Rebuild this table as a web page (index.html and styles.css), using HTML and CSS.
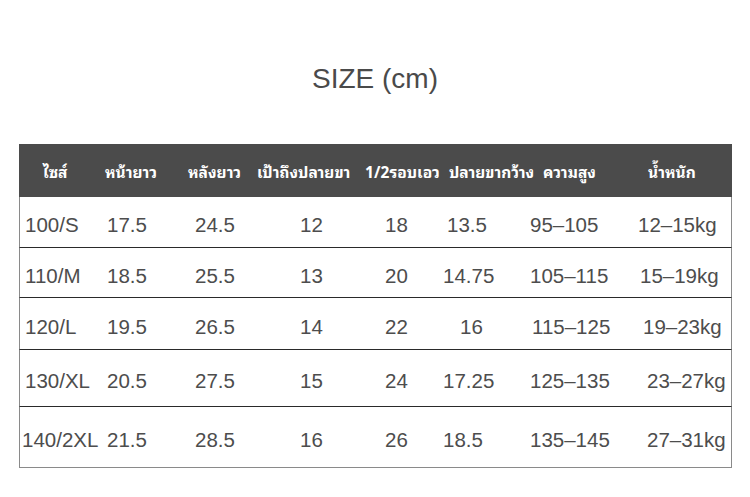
FILE: index.html
```html
<!DOCTYPE html>
<html lang="th">
<head>
<meta charset="utf-8">
<link rel="stylesheet" href="styles.css">
</head>
<body>
<h1 class="title">SIZE (cm)</h1>
<div class="table">
  <div class="head">
    <div class="hc first">ไซส์</div>
    <div class="hc">หน้ายาว</div>
    <div class="hc">หลังยาว</div>
    <div class="hc">เป้าถึงปลายขา</div>
    <div class="hc">1/2รอบเอว</div>
    <div class="hc">ปลายขากว้าง</div>
    <div class="hc">ความสูง</div>
    <div class="hc">น้ำหนัก</div>
  </div>
  <div class="row r1">
    <div class="c first">100/S</div><div class="c">17.5</div><div class="c">24.5</div><div class="c">12</div><div class="c">18</div><div class="c s4">13.5</div><div class="c">95–105</div><div class="c sn2">12–15kg</div>
  </div>
  <div class="row r2">
    <div class="c first">110/M</div><div class="c">18.5</div><div class="c">25.5</div><div class="c">13</div><div class="c">20</div><div class="c">14.75</div><div class="c">105–115</div><div class="c">15–19kg</div>
  </div>
  <div class="row r3">
    <div class="c first">120/L</div><div class="c">19.5</div><div class="c">26.5</div><div class="c">14</div><div class="c">22</div><div class="c s17">16</div><div class="c s2">115–125</div><div class="c s3">19–23kg</div>
  </div>
  <div class="row r4">
    <div class="c first">130/XL</div><div class="c">20.5</div><div class="c">27.5</div><div class="c">15</div><div class="c">24</div><div class="c">17.25</div><div class="c">125–135</div><div class="c s7">23–27kg</div>
  </div>
  <div class="row r5 last">
    <div class="c first wide">140/2XL</div><div class="c">21.5</div><div class="c">28.5</div><div class="c">16</div><div class="c">26</div><div class="c">18.5</div><div class="c">135–145</div><div class="c s7">27–31kg</div>
  </div>
</div>
</body>
</html>
```
FILE: styles.css
```css
html, body {
  margin: 0;
  padding: 0;
  background: #ffffff;
}
body {
  width: 750px;
  height: 497px;
  overflow: hidden;
  font-family: "Liberation Sans", Arial, "Noto Sans Thai", "Noto Sans", sans-serif;
  color: #4d4d4d;
}
.title {
  margin: 0;
  height: 144px;
  box-sizing: border-box;
  padding-top: 61px;
  text-align: center;
  font-size: 28px;
  line-height: 36px;
  font-weight: normal;
  color: #4a4a4a;
}
.table {
  margin-left: 19px;
  width: 713px;
}
.head {
  display: grid;
  grid-template-columns: 86px 83px 69px 108px 84px 94px 105px 84px;
  height: 53px;
  align-items: center;
  background: #4b4b4b;
  color: #ffffff;
  font-family: "Noto Sans Thai Looped", "Loma", "Garuda", "Tlwg Typo", "Noto Sans Thai", "Liberation Sans", sans-serif;
  font-weight: bold;
  font-size: 15.5px;
  white-space: nowrap;
}
.hc.first {
  padding-left: 24px;
}
.row {
  display: grid;
  grid-template-columns: 87px 88px 105px 85px 58px 87px 110px 91px;
  align-items: center;
  border-left: 1px solid #8a8a8a;
  border-right: 1px solid #8a8a8a;
  border-bottom: 1.5px solid #2a2a2a;
  font-size: 20.5px;
  white-space: nowrap;
  box-sizing: border-box;
  padding-top: 6px;
}
.r1 { height: 51px; }
.r2 { height: 50px; }
.r3 { height: 52px; }
.r4 { height: 57px; }
.r5 { height: 61px; }
.row.last {
  border-bottom: 1px solid #8a8a8a;
}
.c.first { padding-left: 5px; }
.c.first.wide { padding-left: 2px; }
.s2 { padding-left: 2px; }
.s3 { padding-left: 3px; }
.s4 { padding-left: 4px; }
.s7 { padding-left: 7px; }
.s17 { padding-left: 17px; }
.sn2 { margin-left: -2px; }
```
